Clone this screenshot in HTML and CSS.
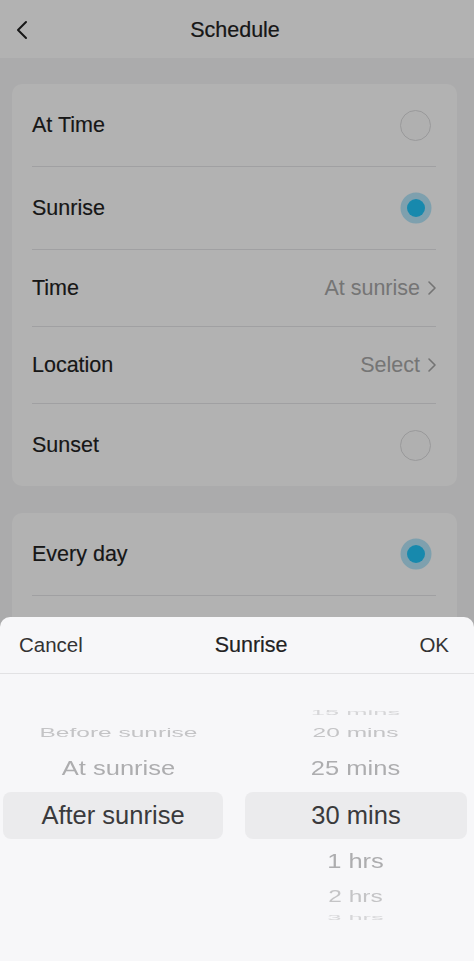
FILE: index.html
```html
<!DOCTYPE html>
<html lang="en">
<head>
    <meta charset="UTF-8">
    <meta name="viewport" content="width=device-width, initial-scale=1.0">
    <title>Schedule</title>
    <link rel="stylesheet" href="styles.css">
</head>

<body>
    <div class="app-bar">
        <button class="back-btn" aria-label="Back">
            <svg width="14" height="20" viewBox="0 0 14 20">
                <path d="M11 2 L3 10 L11 18" fill="none" stroke="#222" stroke-width="2" stroke-linecap="round" stroke-linejoin="round"/>
            </svg>
        </button>
        <h1 class="title">Schedule</h1>
    </div>

    <div class="content">
        <div class="card">
            <div class="row row-radio">
                <span class="label">At Time</span>
                <span class="radio"></span>
            </div>
            <div class="row row-radio">
                <span class="label">Sunrise</span>
                <span class="radio checked"></span>
            </div>
            <div class="row row-value">
                <span class="label">Time</span>
                <span class="value">At sunrise
                    <svg class="chevron" width="10" height="16" viewBox="0 0 10 16">
                        <path d="M2 2 L8 8 L2 14" fill="none" stroke="#a6a6a6" stroke-width="1.6" stroke-linecap="round" stroke-linejoin="round"/>
                    </svg>
                </span>
            </div>
            <div class="row row-value">
                <span class="label">Location</span>
                <span class="value">Select
                    <svg class="chevron" width="10" height="16" viewBox="0 0 10 16">
                        <path d="M2 2 L8 8 L2 14" fill="none" stroke="#a6a6a6" stroke-width="1.6" stroke-linecap="round" stroke-linejoin="round"/>
                    </svg>
                </span>
            </div>
            <div class="row row-radio">
                <span class="label">Sunset</span>
                <span class="radio"></span>
            </div>
        </div>

        <!-- la suite de la liste passe sous le sélecteur -->
        <div class="card card-open">
            <div class="row row-radio">
                <span class="label">Every day</span>
                <span class="radio checked"></span>
            </div>
        </div>
    </div>

    <div class="mask"></div>

    <div class="sheet">
        <div class="sheet-header">
            <button class="sheet-btn">Cancel</button>
            <span class="sheet-title">Sunrise</span>
            <button class="sheet-btn">OK</button>
        </div>

        <div class="picker">
            <div class="wheel wheel-left">
                <div class="opt far3"></div>
                <div class="opt far2">Before sunrise</div>
                <div class="opt near">At sunrise</div>
                <div class="opt sel">After sunrise</div>
            </div>
            <div class="wheel wheel-right">
                <div class="opt far3">15 mins</div>
                <div class="opt far2">20 mins</div>
                <div class="opt near">25 mins</div>
                <div class="opt sel">30 mins</div>
                <div class="opt near next">1 hrs</div>
                <div class="opt far2 next">2 hrs</div>
                <div class="opt far3 last">3 hrs</div>
            </div>
        </div>
    </div>
</body>
</html>
```

FILE: styles.css
```css
body {
    margin: 0;
    height: 961px;
    overflow: hidden;
    background-color: #f5f5f7;
    font-family: "Liberation Sans", Arial, sans-serif;
    color: #222;
}

button {
    font-family: inherit;
    background: none;
    border: none;
    padding: 0;
    cursor: pointer;
}

/* barre du haut */
.app-bar {
    position: relative;
    height: 58px;
    background-color: #fff;
    display: flex;
    align-items: center;
    justify-content: center;
}

.back-btn {
    position: absolute;
    left: 12px;
    top: 20px;
    width: 20px;
    height: 20px;
}

.title {
    margin: 0;
    padding-top: 2px;
    padding-right: 4px;
    font-size: 21.5px;
    font-weight: normal;
    -webkit-text-stroke: 0.2px #222;
}

.content {
    padding: 26px 17px 26px 12px;
    display: flex;
    flex-direction: column;
    gap: 27px;
}

.card {
    background-color: #fff;
    border-radius: 10px;
    padding: 0 21px 0 20px;
}

.card-open {
    height: 420px;
}

.row {
    display: flex;
    align-items: center;
    justify-content: space-between;
    border-bottom: 1px solid #e6e6e8;
}

.row:last-child {
    border-bottom: none;
}

.card-open .row:last-child {
    border-bottom: 1px solid #e6e6e8;
}

.row-radio {
    height: 82px;
}

.row-value {
    height: 76px;
}

.label {
    font-size: 21.5px;
    -webkit-text-stroke: 0.15px #222;
}

.value {
    display: flex;
    align-items: center;
    gap: 7px;
    font-size: 21.5px;
    color: #a8a8a8;
}

.chevron {
    margin-right: -1px;
}

.radio {
    width: 31px;
    height: 31px;
    border: 1.5px solid #dcdcde;
    border-radius: 50%;
    margin-right: 5px;
    box-sizing: border-box;
    background-color: #fcfcfc;
}

.radio.checked {
    width: 18px;
    height: 18px;
    margin-right: 11px;
    border: none;
    background-color: #22c4f8;
    box-shadow: 0 0 0 6.5px rgba(60, 190, 240, 0.38);
}

/* voile sombre derrière le sélecteur */
.mask {
    position: fixed;
    top: 0;
    left: 0;
    right: 0;
    bottom: 0;
    background-color: rgba(0, 0, 0, 0.3);
}

.sheet {
    position: fixed;
    left: 0;
    right: 0;
    bottom: 0;
    height: 344px;
    background-color: #f7f7f9;
    border-radius: 10px 10px 0 0;
}

.sheet-header {
    height: 56px;
    display: flex;
    align-items: center;
    justify-content: space-between;
    padding: 0 25px 0 19px;
    border-bottom: 1px solid #e2e2e4;
}

.sheet-btn {
    font-size: 20.5px;
    color: #333;
}

.sheet-title {
    font-size: 21.5px;
    -webkit-text-stroke: 0.2px #222;
}

.picker {
    display: grid;
    grid-template-columns: 237px 237px;
    padding-top: 28px;
}

.wheel {
    display: flex;
    flex-direction: column;
}

.opt {
    display: flex;
    align-items: center;
    justify-content: center;
    font-size: 25.5px;
    white-space: nowrap;
}

.far3 {
    height: 20px;
    color: #d6d6d8;
    transform: scaleY(0.28);
}

.far3.last {
    height: 12px;
}

.far2 {
    height: 22px;
    color: #c4c4c6;
    font-size: 24.5px;
    transform: scaleY(0.55);
}

.far2.next {
    height: 28px;
    transform: scaleY(0.65);
}

.near {
    height: 48px;
    color: #adadaf;
    transform: scaleY(0.8);
}

.near.next {
    height: 44px;
}

.sel {
    height: 47px;
    color: #3a3a3c;
    background-color: #ebebed;
    border-radius: 8px;
}

.wheel-left .sel {
    margin: 0 14px 0 3px;
}

.wheel-right .sel {
    margin: 0 7px 0 8px;
}
```
